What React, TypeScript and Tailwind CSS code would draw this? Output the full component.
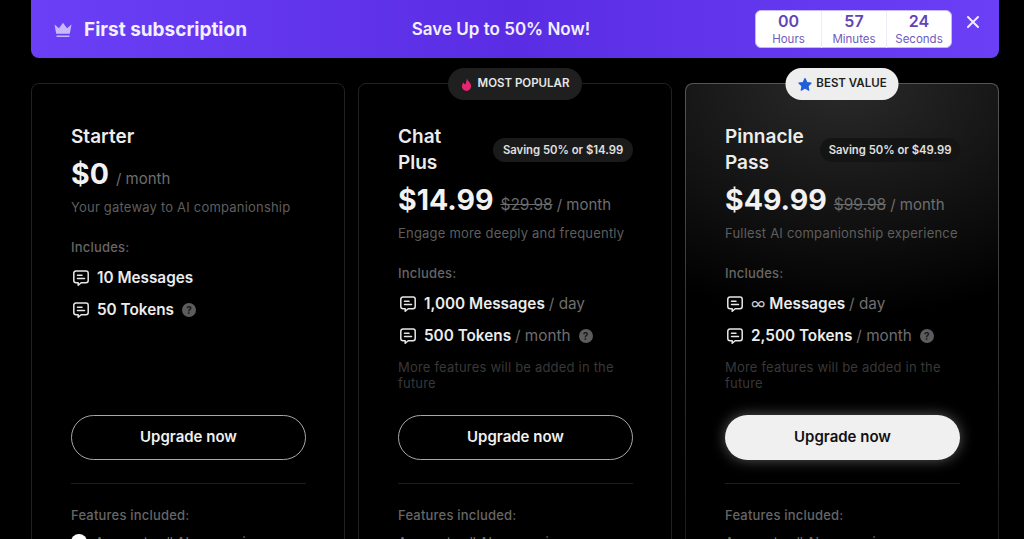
import { FC, ReactNode } from "react";

const ChatIcon: FC = () => (
  <svg viewBox="0 0 18 18" className="h-[18px] w-[18px] shrink-0" fill="none" stroke="#e8e8e8" strokeWidth="1.5" strokeLinecap="round" strokeLinejoin="round">
    <path d="M4 2h10a2.2 2.2 0 0 1 2.2 2.2v7.3a2.2 2.2 0 0 1-2.2 2.2H9.2l-3 2.6v-2.6H4a2.2 2.2 0 0 1-2.2-2.2V4.200A2.200 2.200 0 0 1 4 2z" />
    <path d="M5.500 6.300h4.500M5.500 9.600h7" />
  </svg>
);

const Help: FC = () => (
  <span className="ml-2 flex h-[14px] w-[14px] items-center justify-center rounded-full bg-[#5c5c5c] text-[10px] font-bold leading-none text-[#1a1a1a]">?</span>
);

const Row: FC<{ prefix?: string; strong: string; unit?: string; help?: boolean }> = ({ prefix, strong, unit, help }) => (
  <div className="flex h-6 items-center text-[15.3px]">
    <span className="ml-px flex"><ChatIcon /></span>
    {prefix && <span className="mr-1 ml-[7px] text-[#c8c8c8]">{prefix}</span>}
    <span className={`font-semibold text-[#ececec] ${prefix ? "" : "ml-[7px]"}`}>{strong}</span>
    {unit && <span className="ml-1 text-[#6e6e6e]">{unit}</span>}
    {help && <Help />}
  </div>
);

interface PlanProps {
  name: string;
  saving?: string;
  price: string;
  old?: string;
  desc: string;
  rows: ReactNode;
  more?: boolean;
  best?: boolean;
  badge?: ReactNode;
}

const Plan: FC<PlanProps> = ({ name, saving, price, old, desc, rows, more, best, badge }) => (
  <div className={`relative flex h-[468px] flex-col rounded-lg border pt-10 pr-[38px] pl-[39px] ${best ? "border-transparent [background:radial-gradient(ellipse_110%_50%_at_50%_0%,#2a2a2a,#000000)_padding-box,linear-gradient(#565656,#1e1e1e_90%)_border-box]" : "border-[#212121] bg-black"}`}>
    {badge}
    <div className="flex items-center justify-between">
      <h2 className="w-min text-[19px] leading-[26px] font-semibold text-[#ececec]">{name}</h2>
      {saving && (
        <span className={`flex h-6 w-[140px] items-center justify-center rounded-full text-[11.3px] font-semibold whitespace-nowrap text-[#e0e0e0] ${best ? "bg-[#141414]" : "bg-[#1a1a1a]"}`}>{saving}</span>
      )}
    </div>
    <div className="mt-[6px] flex h-9 items-baseline">
      <span className="text-[28.5px] leading-9 font-bold text-[#f2f2f2]">{price}</span>
      {old && <span className="ml-[7px] text-[15.5px] text-[#6a6a6a] line-through">{old}</span>}
      <span className={`text-[15px] text-[#6e6e6e] ${old ? "ml-1" : "ml-[7px]"}`}>/ month</span>
    </div>
    <p className="mt-[5px] text-[13px] leading-5 tracking-[0.2px] whitespace-nowrap text-[#5e5e5e]">{desc}</p>
    <p className="mt-5 text-[13px] leading-5 font-medium tracking-[0.2px] text-[#666666]">Includes:</p>
    <div className="mt-[9px] flex flex-1 flex-col gap-2">
      {rows}
      {more && (
        <p className="mt-[3px] text-[13px] leading-4 tracking-[0.2px] text-[#383838]">More features will be added in the future</p>
      )}
    </div>
    <button className={`mt-6 h-[45px] shrink-0 rounded-full text-[15px] font-semibold ${best ? "bg-[#f0f0f0] text-[#111111] shadow-[0_0_14px_rgba(255,255,255,0.35)]" : "border border-[#a8a8a8] text-[#f0f0f0]"}`}>
      Upgrade now
    </button>
    <div className="mt-[23px] h-px shrink-0 bg-[#1c1c1c]" />
    <p className="mt-[21px] text-[13px] leading-5 font-medium tracking-[0.2px] text-[#666666]">Features included:</p>
    <div className="mt-[9px] flex items-start gap-2 text-[13px] leading-4 text-[#777777]">
      {!more && <span className="h-4 w-4 shrink-0 rounded-full bg-white" />}
      <span>Access to all AI companions</span>
    </div>
  </div>
);

const Time: FC<{ value: string; label: string; divider?: boolean }> = ({ value, label, divider }) => (
  <div className={`flex w-[66px] flex-col items-center pt-px ${divider ? "border-l border-[#eeebf9]" : ""}`}>
    <span className="text-base leading-[19px] font-semibold text-[#5f45b8]">{value}</span>
    <span className="text-[11.5px] leading-[17px] text-[#6f5bbd]">{label}</span>
  </div>
);

export default function App() {
  return (
    <div className="h-[539px] overflow-hidden bg-black pr-[25px] pl-[31px] font-['Inter',sans-serif]">
      <div className="flex h-[58px] items-center justify-between rounded-b-lg bg-gradient-to-r from-[#6b3ff6] via-[#5a2de4] to-[#6b3ff6] pr-[19px] pl-[23px]">
        <div className="mt-[2px] flex items-center gap-[12px]">
          <svg viewBox="0 0 18 16" className="h-4 w-[18px]" fill="#c9b8fb">
            <path d="M0.500 2.500 5 6.200 9 0.800 13 6.200 17.500 2.500 15.800 11.800H2.200zM2.500 13.400h13V15h-13z" />
          </svg>
          <span className="text-[19px] font-bold text-[#f3effe]">First subscription</span>
        </div>
        <span className="mt-[2px] text-[17px] font-semibold text-[#f3effe]">Save Up to 50% Now!</span>
        <div className="flex items-center gap-[14px]">
          <div className="flex h-[38px] w-[197px] items-center justify-center rounded-md border border-[#c7b8f8] bg-white">
            <Time value="00" label="Hours" />
            <Time value="57" label="Minutes" divider />
            <Time value="24" label="Seconds" divider />
          </div>
          <svg viewBox="0 0 14 14" className="mb-[14px] h-[14px] w-[14px]" fill="none" stroke="#f0ecff" strokeWidth="2" strokeLinecap="round">
            <path d="M2 2l10 10M12 2 2 12" />
          </svg>
        </div>
      </div>
      <div className="mt-[25px] grid grid-cols-3 gap-[13px]">
        <Plan
          name="Starter"
          price="$0"
          desc="Your gateway to AI companionship"
          rows={
            <>
              <Row strong="10 Messages" />
              <Row strong="50 Tokens" help />
            </>
          }
        />
        <Plan
          name="Chat Plus"
          saving="Saving 50% or $14.99"
          price="$14.99"
          old="$29.98"
          desc="Engage more deeply and frequently"
          more
          badge={
            <div className="absolute -top-4 left-1/2 flex h-8 w-[134px] -translate-x-1/2 items-center justify-center gap-[6px] rounded-full bg-[#1f1f1f] text-[11.5px] font-semibold whitespace-nowrap text-[#e6e6e6]">
              <svg viewBox="0 0 12 14" className="h-[13px] w-[11px]" fill="#e5266e">
                <path d="M6.500 0.500C7 3 11 5 11 9a5 5 0 0 1-10 0c0-2 1-3.500 2-4.300C3.300 6 4 6.800 4.800 6.800 5.800 5 5.800 2.500 6.500 0.500z" />
              </svg>
              MOST POPULAR
            </div>
          }
          rows={
            <>
              <Row strong="1,000 Messages" unit="/ day" />
              <Row strong="500 Tokens" unit="/ month" help />
            </>
          }
        />
        <Plan
          name="Pinnacle Pass"
          saving="Saving 50% or $49.99"
          price="$49.99"
          old="$99.98"
          desc="Fullest AI companionship experience"
          more
          best
          badge={
            <div className="absolute -top-4 left-1/2 flex h-8 w-[113px] -translate-x-1/2 items-center justify-center gap-[4px] rounded-full bg-[#eeeeee] text-[11.5px] font-semibold whitespace-nowrap text-[#222222]">
              <svg viewBox="0 0 24 24" className="h-[15px] w-[15px]" fill="#1f5fdc" stroke="#1f5fdc" strokeWidth="2" strokeLinejoin="round">
                <path d="M12 2.500l2.900 6.300 6.800.8-5 4.700 1.300 6.800-6-3.400-6 3.400 1.300-6.800-5-4.700 6.800-.8z" />
              </svg>
              BEST VALUE
            </div>
          }
          rows={
            <>
              <Row prefix="∞" strong="Messages" unit="/ day" />
              <Row strong="2,500 Tokens" unit="/ month" help />
            </>
          }
        />
      </div>
    </div>
  );
}
